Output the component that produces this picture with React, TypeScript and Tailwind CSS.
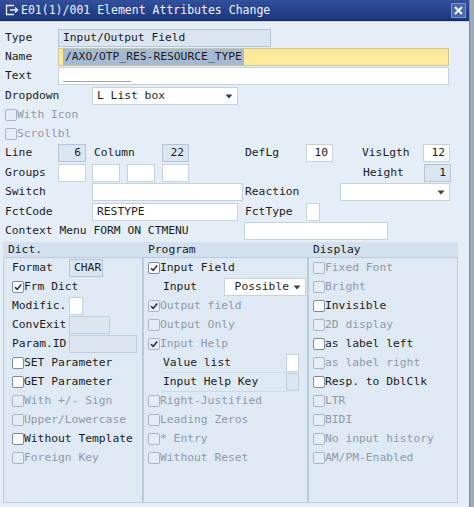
import React from 'react';

const mono = { fontFamily: '"DejaVu Sans Mono", "Liberation Mono", monospace' };

function Box({ className = '', children }: { className?: string; children?: React.ReactNode }) {
  return (
    <div className={`h-[18px] border flex items-center px-[4px] overflow-hidden whitespace-nowrap ${className}`}>
      {children}
    </div>
  );
}

function Caret() {
  return (
    <svg width="8" height="5" viewBox="0 0 8 5" className="shrink-0">
      <path d="M0.5 0.5 L7.5 0.5 L4 4.5 Z" fill="#3a3f47" />
    </svg>
  );
}

function Check({ checked = false, disabled = false, label }: { checked?: boolean; disabled?: boolean; label: string }) {
  return (
    <div className="flex items-center h-[18px]">
      <span
        className={`w-[12px] h-[12px] rounded-[2px] border flex items-center justify-center shrink-0 ${
          disabled ? 'border-[#a9b5c3] bg-[#e4ecf5]' : 'border-[#7f8b99] bg-white'
        }`}
      >
        {checked && (
          <svg width="10" height="10" viewBox="0 0 10 10">
            <path d="M2 5.2 L4.2 7.4 L8.2 2.4" fill="none" stroke="#2a2f36" strokeWidth="1.6" />
          </svg>
        )}
      </span>
      <span className={disabled ? 'text-[#8f9aa7]' : 'text-[#1b1d21]'}>{label}</span>
    </div>
  );
}

function Column({ title, className, children }: { title: string; className: string; children: React.ReactNode }) {
  return (
    <div className={`flex flex-col ${className}`}>
      <div className="h-[16px] bg-[#d2e0ef] border-b border-[#bccbdb] flex items-center px-[5px] text-[#1b1d21]">
        {title}
      </div>
      <div className="flex-1 bg-[#dfe9f4] border border-t-0 border-[#bccbdb] pt-[1px] pl-[4px] flex flex-col">
        {children}
      </div>
    </div>
  );
}

export default function App() {
  const ro = 'bg-[#dae5f1] border-[#b5c4d5]';
  const wh = 'bg-white border-[#c6d1de]';
  return (
    <div className="w-[474px] h-[507px] flex bg-[#9fabbd] text-[11.3px] text-[#1b1d21] leading-[18px]" style={mono}>
      <div className="w-[470px] h-full flex flex-col bg-[#e5edf6] border-r border-[#7d8aa3]">
        {/* title bar */}
        <div className="h-[21px] flex items-center bg-gradient-to-b from-[#33509e] to-[#1c367c] border-b border-[#14285f] pl-[5px] pr-[3px]">
          <svg width="14" height="12" viewBox="0 0 14 12" className="shrink-0">
            <path d="M9 1.5 H1.5 V10.5 H9" fill="none" stroke="#e9effb" strokeWidth="1.3" />
            <path d="M5 6 H12.5 M10 3.5 L12.5 6 L10 8.5" fill="none" stroke="#e9effb" strokeWidth="1.3" />
          </svg>
          <span className="ml-[2px] text-[#eef3fd] text-[11.5px]">E01(1)/001 Element Attributes Change</span>
          <div className="ml-auto w-[15px] h-[15px] bg-[#4a68ad] border border-[#7c94c7] flex items-center justify-center">
            <svg width="9" height="9" viewBox="0 0 9 9">
              <path d="M1 1 L8 8 M8 1 L1 8" stroke="#ffffff" strokeWidth="1.8" />
            </svg>
          </div>
        </div>
        <div className="h-[1px] bg-[#c9d5e6]" />

        <div className="pt-[7px] pl-[5px] flex flex-col">
          {/* Type */}
          <div className="h-[19px] flex">
            <span className="w-[53px]">Type</span>
            <Box className={`w-[213px] ${ro}`}>Input/Output Field</Box>
          </div>
          {/* Name */}
          <div className="h-[19px] flex">
            <span className="w-[53px]">Name</span>
            <Box className="w-[391px] bg-[#fde99c] border-[#cfc79a] px-[2px]">
              <span className="bg-[#a6b9d3] px-[2px]">/AXO/OTP_RES-RESOURCE_TYPE</span>
            </Box>
          </div>
          {/* Text */}
          <div className="h-[20px] flex">
            <span className="w-[53px]">Text</span>
            <Box className={`w-[391px] ${wh}`}>__________</Box>
          </div>
          {/* Dropdown */}
          <div className="h-[19px] flex">
            <span className="w-[87px]">Dropdown</span>
            <Box className={`w-[146px] ${wh} justify-between`}>
              <span>L List box</span>
              <Caret />
            </Box>
          </div>
          <div className="h-[19px] flex">
            <Check disabled label="With Icon" />
          </div>
          <div className="h-[19px] flex">
            <Check disabled label="Scrollbl" />
          </div>
          {/* Line */}
          <div className="h-[20px] flex">
            <span className="w-[53px]">Line</span>
            <Box className={`w-[28px] ${ro} justify-end`}>6</Box>
            <span className="w-[76px] pl-[8px]">Column</span>
            <Box className={`w-[27px] ${ro} justify-end`}>22</Box>
            <span className="w-[117px] pl-[56px]">DefLg</span>
            <Box className={`w-[27px] ${wh} justify-end`}>10</Box>
            <span className="w-[90px] pl-[29px]">VisLgth</span>
            <Box className={`w-[27px] ${wh} justify-end`}>12</Box>
          </div>
          {/* Groups */}
          <div className="h-[19px] flex">
            <span className="w-[53px]">Groups</span>
            <Box className={`w-[28px] ${wh}`} />
            <Box className={`w-[28px] ml-[6px] ${wh}`} />
            <Box className={`w-[28px] ml-[7px] ${wh}`} />
            <Box className={`w-[27px] ml-[7px] ${wh}`} />
            <span className="w-[174px] pl-[174px]" />
            <span className="w-[61px]">Height</span>
            <Box className={`w-[27px] ${ro} justify-end`}>1</Box>
          </div>
          {/* Switch */}
          <div className="h-[20px] flex">
            <span className="w-[87px]">Switch</span>
            <Box className={`w-[151px] ${wh}`} />
            <span className="w-[97px] pl-[2px]">Reaction</span>
            <Box className={`w-[110px] ${wh} justify-end`}>
              <Caret />
            </Box>
          </div>
          {/* FctCode */}
          <div className="h-[19px] flex">
            <span className="w-[87px]">FctCode</span>
            <Box className={`w-[146px] ${wh}`}>RESTYPE</Box>
            <span className="w-[68px] pl-[7px]">FctType</span>
            <Box className={`w-[14px] ${wh}`} />
          </div>
          {/* Context menu */}
          <div className="h-[20px] flex">
            <span className="w-[239px]">Context Menu FORM ON CTMENU</span>
            <Box className={`w-[144px] ${wh}`} />
          </div>
        </div>

        {/* attribute groups */}
        <div className="ml-[3px] w-[455px] h-[261px] flex">
          <Column title="Dict." className="w-[140px]">
            <div className="h-[19px] flex pl-[4px]">
              <span className="w-[57px]">Format</span>
              <Box className={`w-[34px] ${ro}`}>CHAR</Box>
            </div>
            <div className="h-[19px] pl-[4px] flex">
              <Check checked label="Frm Dict" />
            </div>
            <div className="h-[19px] flex pl-[4px]">
              <span className="w-[57px]">Modific.</span>
              <Box className={`w-[14px] ${wh}`} />
            </div>
            <div className="h-[19px] flex pl-[4px]">
              <span className="w-[57px]">ConvExit</span>
              <Box className="w-[41px] bg-[#dbe6f1] border-[#bfcddc]" />
            </div>
            <div className="h-[19px] flex pl-[4px]">
              <span className="w-[57px]">Param.ID</span>
              <Box className="w-[68px] bg-[#dbe6f1] border-[#bfcddc]" />
            </div>
            <div className="h-[19px] pl-[4px] flex">
              <Check label="SET Parameter" />
            </div>
            <div className="h-[19px] pl-[4px] flex">
              <Check label="GET Parameter" />
            </div>
            <div className="h-[19px] pl-[4px] flex">
              <Check disabled label="With +/- Sign" />
            </div>
            <div className="h-[19px] pl-[4px] flex">
              <Check disabled label="Upper/Lowercase" />
            </div>
            <div className="h-[19px] pl-[4px] flex">
              <Check label="Without Template" />
            </div>
            <div className="h-[19px] pl-[4px] flex">
              <Check disabled label="Foreign Key" />
            </div>
          </Column>

          <Column title="Program" className="w-[165px]">
            <div className="h-[19px] flex">
              <Check checked label="Input Field" />
            </div>
            <div className="h-[19px] flex pl-[15px]">
              <span className="w-[61px]">Input</span>
              <Box className={`w-[82px] ${wh} justify-end gap-[4px]`}>
                <span>Possible</span>
                <Caret />
              </Box>
            </div>
            <div className="h-[19px] flex">
              <Check checked disabled label="Output field" />
            </div>
            <div className="h-[19px] flex">
              <Check disabled label="Output Only" />
            </div>
            <div className="h-[19px] flex">
              <Check checked disabled label="Input Help" />
            </div>
            <div className="h-[19px] flex pl-[15px]">
              <span className="w-[123px] border-b border-[#cbd8e6]">Value list</span>
              <Box className={`w-[13px] ${wh}`} />
            </div>
            <div className="h-[19px] flex pl-[15px]">
              <span className="w-[123px] border-b border-[#cbd8e6]">Input Help Key</span>
              <Box className="w-[13px] bg-[#dbe6f1] border-[#bfcddc]" />
            </div>
            <div className="h-[19px] flex">
              <Check disabled label="Right-Justified" />
            </div>
            <div className="h-[19px] flex">
              <Check disabled label="Leading Zeros" />
            </div>
            <div className="h-[19px] flex">
              <Check disabled label="* Entry" />
            </div>
            <div className="h-[19px] flex">
              <Check disabled label="Without Reset" />
            </div>
          </Column>

          <Column title="Display" className="w-[150px]">
            <div className="h-[19px] flex"><Check disabled label="Fixed Font" /></div>
            <div className="h-[19px] flex"><Check disabled label="Bright" /></div>
            <div className="h-[19px] flex"><Check label="Invisible" /></div>
            <div className="h-[19px] flex"><Check disabled label="2D display" /></div>
            <div className="h-[19px] flex"><Check label="as label left" /></div>
            <div className="h-[19px] flex"><Check disabled label="as label right" /></div>
            <div className="h-[19px] flex"><Check label="Resp. to DblClk" /></div>
            <div className="h-[19px] flex"><Check disabled label="LTR" /></div>
            <div className="h-[19px] flex"><Check disabled label="BIDI" /></div>
            <div className="h-[19px] flex"><Check disabled label="No input history" /></div>
            <div className="h-[19px] flex"><Check disabled label="AM/PM-Enabled" /></div>
          </Column>
        </div>
      </div>
      <div className="flex-1" />
    </div>
  );
}
